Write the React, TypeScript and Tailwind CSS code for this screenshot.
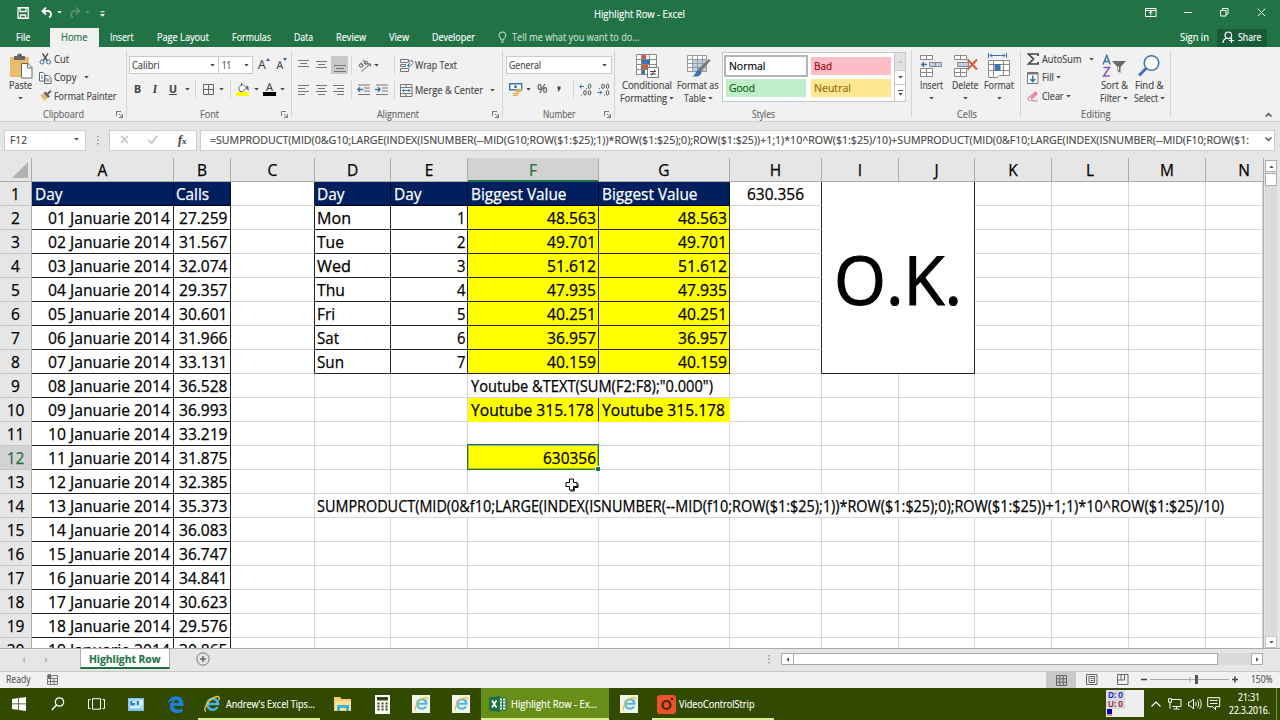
import { useLayoutEffect, useRef, useState } from "react";
import type { ReactNode } from "react";
import clsx from "clsx";

// Text squeezed or stretched to a known width, so labels keep their size in every font
function Fit({ w, className, children }: { w: number; className?: string; children: ReactNode }) {
  const ref = useRef<HTMLSpanElement>(null);
  const [scale, setScale] = useState(1);

  useLayoutEffect(() => {
    const el = ref.current;
    if (!el) return;
    el.style.transform = "none";
    const natural = el.getBoundingClientRect().width;
    el.style.transform = `scaleX(${w / natural})`;
    setScale(w / natural);
  }, [w, children]);

  return (
    <span className={clsx("block shrink-0 whitespace-nowrap", className)} style={{ width: w }}>
      <span ref={ref} className="inline-block origin-left" style={{ transform: `scaleX(${scale})` }}>
        {children}
      </span>
    </span>
  );
}

function Caret({ className }: { className?: string }) {
  return (
    <svg className={clsx("shrink-0", className)} width="5" height="3" viewBox="0 0 5 3">
      <path d="M.3 0h4.400L2.500 2.600z" fill="currentColor" />
    </svg>
  );
}

function Svg({ w, h, className, children }: { w: number; h: number; className?: string; children: ReactNode }) {
  return (
    <svg className={clsx("shrink-0", className)} width={w} height={h} viewBox={`0 0 ${w} ${h}`} fill="none">
      {children}
    </svg>
  );
}

function Lines({ rows, className }: { rows: [number, number][]; className?: string }) {
  return (
    <Svg w={12} h={12} className={className}>
      {rows.map(([x, len], i) => (
        <path key={i} d={`M${x} ${i * 3 + 1.5}h${len}`} stroke="#777" />
      ))}
    </Svg>
  );
}

function Group({ className, label, labelW, launcher, children }: { className: string; label: string; labelW: number; launcher?: boolean; children: ReactNode }) {
  return (
    <div className={clsx("relative flex h-[74px] shrink-0 flex-col", className)}>
      <div className="h-[60px]">{children}</div>
      <div className="flex h-[14px] items-center justify-center text-[#666]">
        <Fit w={labelW}>{label}</Fit>
      </div>
      {launcher && (
        <Svg w={7} h={7} className="absolute right-[4px] bottom-[3px]">
          <path d="M.5 5V.5H5M3 3l3 3M6.500 3v3.500H3" stroke="#777" />
        </Svg>
      )}
      <div className="absolute top-[4px] right-0 h-[66px] w-px bg-[#d4d4d4]" />
    </div>
  );
}

function Big({ className, icon, l1, w1, l2, w2 }: { className: string; icon: ReactNode; l1: string; w1: number; l2?: string; w2?: number }) {
  return (
    <div className={clsx("flex shrink-0 flex-col items-center", className)}>
      <div className="mt-[5px] flex h-[27px] items-center">{icon}</div>
      <div className="flex h-[13px] items-center">
        <Fit w={w1}>{l1}</Fit>
      </div>
      <div className="flex h-[13px] items-center gap-[2px]">
        {l2 && <Fit w={w2 ?? 20}>{l2}</Fit>}
        <Caret />
      </div>
    </div>
  );
}

function Vr({ className }: { className?: string }) {
  return <div className={clsx("h-[18px] w-px shrink-0 bg-[#d4d4d4]", className)} />;
}

const tabs = [
  { name: "Insert", w: 23.500, cls: "ml-[11px]" },
  { name: "Page Layout", w: 52, cls: "ml-[23.5px]" },
  { name: "Formulas", w: 39, cls: "ml-[23px]" },
  { name: "Data", w: 19, cls: "ml-[23.5px]" },
  { name: "Review", w: 30, cls: "ml-[23px]" },
  { name: "View", w: 20, cls: "ml-[23px]" },
  { name: "Developer", w: 43, cls: "ml-[23px]" },
];

function TitleBar() {
  return (
    <header className="h-[47px] bg-[#217346] text-white">
      <div className="flex h-7 items-center">
        <Svg w={12} h={12} className="ml-[17px] -mt-[3px]">
          <path d="M1 .75h10.200v10.500H1z" stroke="#fff" strokeWidth="1.300" />
          <path d="M3 1v3.500h6V1M3.500 11V8h5v3" stroke="#fff" strokeWidth="1.300" />
        </Svg>
        <Svg w={12} h={11} className="ml-[12px] -mt-[3px]">
          <path d="M5 .5L1.500 4 5 7.500M1.500 4H7a3.300 3.300 0 0 1 1 6.300" stroke="#fff" strokeWidth="1.800" />
        </Svg>
        <Caret className="ml-[4px] -mt-[4px]" />
        <Svg w={12} h={11} className="ml-[7px] -mt-[3px] opacity-25">
          <path d="M7 .5L10.500 4 7 7.500M10.500 4H5a3.300 3.300 0 0 0-1 6.300" stroke="#fff" strokeWidth="1.500" />
        </Svg>
        <Caret className="ml-[4px] -mt-[4px] opacity-30" />
        <Svg w={5} h={6} className="ml-[10px] -mt-px">
          <path d="M.5 .75h4" stroke="#fff" />
          <path d="M0 3h5L2.500 5.800z" fill="#fff" />
        </Svg>
        <Fit w={91} className="ml-[488.500px]">Highlight Row - Excel</Fit>
        <Svg w={12} h={9} className="ml-[460.500px] -mt-1">
          <path d="M.5 .5h10.500v8H.5zM.5 2.500h10.500M5.750 7.500v-4M4 5l1.750-1.700L7.500 5" stroke="#fff" />
        </Svg>
        <Svg w={8} h={9} className="ml-[27px] -mt-1">
          <path d="M0 4.500h8" stroke="#fff" />
        </Svg>
        <Svg w={9} h={9} className="ml-[28px] -mt-1">
          <path d="M.5 2.500h5.500V8H.5zM2.500 2.500V.5H8V6H6" stroke="#fff" />
        </Svg>
        <Svg w={9} h={9} className="ml-[28px] -mt-1">
          <path d="M.7 .7l7.500 7.500M8.200 .7L.7 8.200" stroke="#fff" />
        </Svg>
      </div>
      <nav className="flex h-[19px] items-center">
        <Fit w={14.500} className="ml-[16px]">File</Fit>
        <div className="ml-[19px] flex h-full w-[49px] items-center justify-center bg-[#f1f1f1] text-[#217346]">
          <Fit w={26.500}>Home</Fit>
        </div>
        {tabs.map((t) => (
          <Fit key={t.name} w={t.w} className={t.cls}>{t.name}</Fit>
        ))}
        <Svg w={9} h={13} className="ml-[23px]">
          <path d="M3 9V7.500C1.500 6.500 1 5.500 1 4.300a3.400 3.400 0 0 1 6.800 0c0 1.200-.6 2.200-2 3.200V9zM3 11h3" stroke="#d5e8dc" />
        </Svg>
        <Fit w={127.500} className="ml-[5px] text-[#c8dfd1]">Tell me what you want to do...</Fit>
        <Fit w={29} className="ml-[540px]">Sign in</Fit>
        <div className="ml-[8px] flex h-[18px] w-[50px] items-center bg-[#185c37]">
          <Svg w={13} h={13} className="ml-[5px]">
            <circle cx="6.300" cy="4.300" r="3.300" stroke="#fff" strokeWidth="1.200" />
            <path d="M.8 12c.3-2.600 1.600-4 3.600-4.700M7 9.500h5M9.500 7v5" stroke="#fff" strokeWidth="1.200" />
          </Svg>
          <Fit w={23.500} className="ml-[3px]">Share</Fit>
        </div>
      </nav>
    </header>
  );
}

function Ribbon() {
  return (
    <div className="flex h-[75px] border-b border-[#d2d2d2] bg-[#f1f1f1] text-[#444]">
      <Group className="w-[127px]" label="Clipboard" labelW={41} launcher>
        <div className="flex">
          <Big
            className="ml-[8px] w-[25px]"
            l1="Paste"
            w1={23}
            icon={
              <Svg w={24} h={26}>
                <path d="M1 4h19v20H1z" fill="#e8bd6d" />
                <path d="M5 3h3a2.500 2.500 0 0 1 5 0h3v4H5z" fill="#666" />
                <path d="M12.500 10.500h6.500l4 4v10.500H12.500z" fill="#fff" stroke="#666" />
                <path d="M18.500 10.500v4.500h4.500" stroke="#666" />
              </Svg>
            }
          />
          <div className="ml-[6px] mt-[3px] flex flex-col">
            <div className="flex h-[18px] items-center">
              <Svg w={13} h={12}>
                <path d="M3.500 .5L8.500 8M9 .5L4 8" stroke="#555" strokeWidth="1.400" />
                <circle cx="3" cy="9" r="2" stroke="#3b72b0" />
                <circle cx="9.500" cy="9" r="2" stroke="#3b72b0" />
              </Svg>
              <Fit w={15} className="ml-[2px]">Cut</Fit>
            </div>
            <div className="flex h-[19px] items-center">
              <Svg w={13} h={12}>
                <path d="M.5 .5h3.500l2 2V9H.5zM5.500 3.500H9.500l2.500 2.500v5.500H5.500z" fill="#fff" stroke="#666" />
                <path d="M2 4h2M2 6h2M7 7h3.500M7 9h3.500" stroke="#3b72b0" />
              </Svg>
              <Fit w={22.500} className="ml-[2px]">Copy</Fit>
              <Caret className="ml-[7px]" />
            </div>
            <div className="flex h-[18px] items-center">
              <Svg w={13} h={12}>
                <path d="M1 5l4-1.500 4 4L5.500 11z" fill="#e8bd6d" />
                <path d="M4.500 3l2-1.500 4.500 5L9 8z" fill="#666" />
                <path d="M8.500 4L12 .7" stroke="#666" strokeWidth="2" />
              </Svg>
              <Fit w={62.500} className="ml-[2px]">Format Painter</Fit>
            </div>
          </div>
        </div>
      </Group>

      <Group className="w-[165px]" label="Font" labelW={19} launcher>
        <div className="ml-[2px] flex h-[18px] translate-y-[9px] items-center">
          <div className="flex h-[18px] w-[90px] items-center border border-[#ccc] bg-white pl-[2px]">
            <Fit w={27.500}>Calibri</Fit>
            <Caret className="ml-[50px]" />
          </div>
          <div className="-ml-px flex h-[18px] w-[35px] items-center border border-[#ccc] bg-white pl-[3px]">
            <Fit w={9}>11</Fit>
            <Caret className="ml-[13px]" />
          </div>
          <span className="ml-[5px] text-[12px] leading-none">A</span>
          <Svg w={4} h={3} className="-mt-[11px]">
            <path d="M0 3h4L2 0z" fill="#3b5f96" />
          </Svg>
          <span className="ml-[7px] mt-px text-[10.500px] leading-none">A</span>
          <Svg w={4} h={3} className="-mt-[11px]">
            <path d="M0 0h4L2 3z" fill="#3b5f96" />
          </Svg>
        </div>
        <div className="flex h-[18px] translate-y-[15px] items-center">
          <span className="ml-[7px] w-[8px] text-[10.500px] font-bold">B</span>
          <span className="ml-[11px] w-[6px] font-serif text-[11px] font-bold italic">I</span>
          <span className="ml-[10px] w-[8px] text-[10.500px] font-bold underline">U</span>
          <Caret className="ml-[8px]" />
          <Vr className="ml-[5px]" />
          <Svg w={11} h={11} className="ml-[7px]">
            <path d="M.5 .5h10v10H.5zM5.500 .5v10M.5 5.500h10" stroke="#666" />
          </Svg>
          <Caret className="ml-[5px]" />
          <Vr className="ml-[6px]" />
          <Svg w={14} h={14} className="ml-[5px]">
            <path d="M0 10h13v4H0z" fill="#ffff00" />
            <path d="M2.500 5.500L6.500 2l4 4-4 3.500H4z" fill="#fff" stroke="#666" />
            <path d="M5.500 4V1" stroke="#666" />
            <path d="M10.500 3.500c2 .5 2.500 2.500 2 5.500l-2-2.500z" fill="#3b5f96" />
          </Svg>
          <Caret className="ml-[4px]" />
          <div className="ml-[4px] flex w-[13px] flex-col items-center">
            <span className="text-[11px] leading-[10px]">A</span>
            <div className="h-[4px] w-full bg-black" />
          </div>
          <Caret className="ml-[4px]" />
        </div>
      </Group>

      <Group className="w-[211px]" label="Alignment" labelW={42} launcher>
        <div className="flex h-[18px] translate-y-[9px] items-center">
          <Lines rows={[[0, 11], [2, 7], [0, 11]]} className="ml-[6px]" />
          <Lines rows={[[0, 0], [0, 11], [2, 7], [0, 11]]} className="ml-[6px] -mt-1" />
          <div className="ml-[3px] flex h-[18px] w-[17px] items-end justify-center bg-[#c8c8c8]">
            <Lines rows={[[0, 0], [0, 12], [2, 8], [0, 12]]} className="mb-px" />
          </div>
          <Vr className="ml-[3px]" />
          <Svg w={14} h={13} className="ml-[6px]">
            <circle cx="3" cy="6.500" r="1.700" stroke="#555" />
            <path d="M3 3.500l2.500 3.500M5 .8l3 4.500" stroke="#555" />
            <circle cx="8" cy="3.700" r="1.500" stroke="#555" />
            <path d="M3.500 12.500L12 5M9 4.800h3.300v3" stroke="#666" />
          </Svg>
          <Caret className="ml-[2px]" />
          <Vr className="ml-[15px]" />
          <Svg w={14} h={13} className="ml-[5px]">
            <path d="M.5 .5h8v3h-8zM.5 5.500h5v2h-5zM.5 9.500h8v3h-8z" stroke="#777" />
            <path d="M9 2h4M13 2.500c0 3-1 4-5 4M10 4L7.500 6.500 10 9" stroke="#3b72b0" />
          </Svg>
          <Fit w={42} className="ml-[1px]">Wrap Text</Fit>
        </div>
        <div className="flex h-[18px] translate-y-[16px] items-center">
          <Lines rows={[[0, 11], [0, 7], [0, 11], [0, 7]]} className="ml-[6px]" />
          <Lines rows={[[0, 11], [2, 7], [0, 11], [2, 7]]} className="ml-[6px]" />
          <Lines rows={[[0, 11], [4, 7], [0, 11], [4, 7]]} className="ml-[5px]" />
          <Vr className="ml-[6px]" />
          <Svg w={14} h={12} className="ml-[5px]">
            <path d="M1 1h12M7 4h6M7 7h6M1 10.500h12" stroke="#777" />
            <path d="M6 5.500H1M3 3.200L.8 5.500 3 7.800" stroke="#3b72b0" strokeWidth="1.300" />
          </Svg>
          <Svg w={14} h={12} className="ml-[4px]">
            <path d="M1 1h12M7 4h6M7 7h6M1 10.500h12" stroke="#777" />
            <path d="M0 5.500h5M3 3.200l2.200 2.300L3 7.800" stroke="#3b72b0" strokeWidth="1.300" />
          </Svg>
          <Vr className="ml-[5px]" />
          <Svg w={13} h={13} className="ml-[5px]">
            <path d="M.5 .5h11.500v12H.5zM.5 3.500h11.500M.5 9.500h11.500M6 .5v3M6 9.500v3" stroke="#777" />
            <path d="M2.500 6.500h7.500M4 5L2.500 6.500 4 8M8.500 5L10 6.500 8.500 8" stroke="#3b72b0" />
          </Svg>
          <Fit w={68} className="ml-[2px]">Merge & Center</Fit>
          <Caret className="ml-[7px]" />
        </div>
      </Group>

      <Group className="w-[112px]" label="Number" labelW={32.500} launcher>
        <div className="ml-[3px] flex h-[18px] w-[106px] translate-y-[9px] items-center border border-[#ccc] bg-white pl-[2px]">
          <Fit w={32}>General</Fit>
          <Caret className="ml-[61px]" />
        </div>
        <div className="flex h-[18px] translate-y-[15px] items-center">
          <Svg w={14} h={13} className="ml-[6px]">
            <path d="M.7 .7h12v6H.7z" fill="#fff" stroke="#3b72b0" strokeWidth="1.400" />
            <circle cx="6.500" cy="3.700" r="1.500" fill="#3b72b0" />
            <path d="M7 6.500h6M7 8.500h5M4 10.500h6M4 12.500h5" stroke="#e3a951" strokeWidth="1.300" />
          </Svg>
          <Caret className="ml-[3px]" />
          <Fit w={10.500} className="ml-[6px] text-[12px]">%</Fit>
          <Svg w={4} h={6} className="ml-[9px]">
            <path d="M.5 .5h3v2.500L1.500 5.500H.5L1.500 3H.5z" fill="#444" />
          </Svg>
          <Vr className="ml-[12px]" />
          <Svg w={13} h={13} className="ml-[5px]">
            <path d="M5 3.500H1M2.500 1.500L.7 3.500l1.800 2" stroke="#3b72b0" />
            <ellipse cx="10.500" cy="3.300" rx="1.300" ry="2.300" stroke="#555" />
            <path d="M7 5.500h1M1.800 12h1" stroke="#555" />
            <ellipse cx="6" cy="9.800" rx="1.300" ry="2.300" stroke="#555" />
            <ellipse cx="10.500" cy="9.800" rx="1.300" ry="2.300" stroke="#555" />
          </Svg>
          <Svg w={13} h={13} className="ml-[5px]">
            <path d="M.5 9.500h4.500M3 7.500l1.800 2L3 11.500" stroke="#3b72b0" />
            <ellipse cx="6" cy="3.300" rx="1.300" ry="2.300" stroke="#555" />
            <ellipse cx="10.500" cy="3.300" rx="1.300" ry="2.300" stroke="#555" />
            <path d="M1.800 5.500h1M7 12h1" stroke="#555" />
            <ellipse cx="10.500" cy="9.800" rx="1.300" ry="2.300" stroke="#555" />
          </Svg>
        </div>
      </Group>

      <Group className="w-[297px]" label="Styles" labelW={23}>
        <div className="flex">
          <Big
            className="ml-[4px] w-[55px]"
            l1="Conditional"
            w1={50}
            l2="Formatting"
            w2={47}
            icon={
              <Svg w={24} h={26}>
                <path d="M1.500 1.500h20v20h-20z" fill="#fff" />
                <path d="M1.500 1.500h20v20h-20zM1.500 6.500h20M1.500 11.500h20M1.500 16.500h20M6.500 1.500v20M14.500 1.500v20" stroke="#888" />
                <path d="M7 2h4v4H7zM7 12h6v4H7z" fill="#d1593c" />
                <path d="M7 7h8v4H7zM7 17h3v4H7z" fill="#3b72b0" />
                <path d="M12.500 14.500h11v10h-11z" fill="#fff" stroke="#777" />
                <path d="M15 18.500h6M15 21h6M20 16.500l-3.500 6" stroke="#444" />
              </Svg>
            }
          />
          <Big
            className="ml-[2px] w-[44px]"
            l1="Format as"
            w1={41.500}
            l2="Table"
            w2={22}
            icon={
              <Svg w={25} h={25}>
                <path d="M1.500 2.500h19v16h-19z" fill="#fff" />
                <path d="M6 7h14v11H6z" fill="#bcd0e8" />
                <path d="M1.500 2.500h19v16h-19zM1.500 6.500h19M1.500 10.500h19M1.500 14.500h19M6.500 2.500v16M11.500 2.500v16M16.500 2.500v16" stroke="#999" />
                <path d="M23.500 7.500L15 17l-2-1L23 7z" fill="#777" stroke="#777" strokeWidth="1.500" />
                <path d="M6 23c4 0 3-6 7-6 3 0 3 3 1.500 4.500C12.500 24 9 24 6 23z" fill="#3b72b0" />
              </Svg>
            }
          />
          <div className="ml-[2px] mt-[5px] flex h-[50px] w-[184px] border border-[#c6c6c6] bg-white">
            <div className="flex w-[171px] flex-wrap content-start text-[11px]">
              <div className="ml-[1px] mt-[2px] flex h-[22px] w-[84px] items-center border-2 border-[#b5b5b5] pb-[2px] pl-[3px] text-black">
                <Fit w={36.500}>Normal</Fit>
              </div>
              <div className="mt-[4px] ml-[3px] flex h-[18px] w-[80px] items-center bg-[#fdbdc7] pb-[2px] pl-[3px] text-[#9c0006]">
                <Fit w={18}>Bad</Fit>
              </div>
              <div className="mt-[2px] ml-[3px] flex h-[18px] w-[80px] items-center bg-[#c0edca] pb-[2px] pl-[3px] text-[#006100]">
                <Fit w={26}>Good</Fit>
              </div>
              <div className="mt-[2px] ml-[5px] flex h-[18px] w-[80px] items-center bg-[#ffe893] pb-[2px] pl-[3px] text-[#9c6500]">
                <Fit w={37}>Neutral</Fit>
              </div>
            </div>
            <div className="flex grow flex-col border-l border-[#c6c6c6]">
              <div className="flex h-[17px] items-center justify-center bg-[#e1e1e1]">
                <Caret className="rotate-180 text-[#bbb]" />
              </div>
              <div className="flex h-[15px] items-center justify-center border-y border-[#c6c6c6]">
                <Caret />
              </div>
              <div className="flex grow flex-col items-center justify-center gap-[2px]">
                <div className="h-px w-[5px] bg-[#555]" />
                <Caret />
              </div>
            </div>
          </div>
        </div>
      </Group>

      <Group className="w-[109px]" label="Cells" labelW={20}>
        <div className="flex">
          <Big
            className="ml-[5px] w-[28px]"
            l1="Insert"
            w1={23}
            icon={
              <Svg w={22} h={24}>
                <path d="M.5 1.500h12v4H.5zM6.500 1.500v4M.5 14.500h12v8H.5zM.5 18.500h12M6.500 14.500v8" fill="#fff" stroke="#888" />
                <path d="M9.500 8.500h12v4h-12z" fill="#bcd0e8" stroke="#888" />
                <path d="M15.500 8.500v4" stroke="#888" />
                <path d="M7 10.500H2M4 8.300L1.800 10.500 4 12.700" stroke="#3b72b0" strokeWidth="1.400" />
              </Svg>
            }
          />
          <Big
            className="ml-[5px] w-[30px]"
            l1="Delete"
            w1={26.500}
            icon={
              <Svg w={25} h={24}>
                <path d="M1.500 1.500h12v4h-12zM7.500 1.500v4M1.500 14.500h12v8h-12zM1.500 18.500h12M7.500 14.500v8" fill="#fff" stroke="#888" />
                <path d="M4.500 8.500h11v4h-11z" fill="#bcd0e8" stroke="#888" />
                <path d="M14.500 5.500l9.500 10M24 5.500l-9.500 10" stroke="#d9593c" strokeWidth="2" />
              </Svg>
            }
          />
          <Big
            className="ml-[3px] w-[32px]"
            l1="Format"
            w1={30}
            icon={
              <Svg w={24} h={25}>
                <path d="M1.500 0v5M19.500 0v5M3 2.500h15M5 .5l-2 2 2 2M16 .5l2 2-2 2" stroke="#3b72b0" />
                <path d="M1.500 7.500h21v14h-9l-2 3h-10z" fill="#fff" />
                <path d="M1.500 7.500h21v15h-10l-2 2h-9zM1.500 11.500h21M1.500 17.500h21M6.500 7.500v16M16.500 7.500v15" stroke="#888" />
                <path d="M7.500 11h6v7h-6z" fill="#3b72b0" />
              </Svg>
            }
          />
        </div>
      </Group>

      <Group className="w-[150px]" label="Editing" labelW={29.500}>
        <div className="flex">
          <div className="ml-[6px] mt-[3px] flex w-[66px] flex-col">
            <div className="flex h-[18px] items-center">
              <Svg w={12} h={12}>
                <path d="M11 3V1H1.500l5 5-5 5H11V9" stroke="#444" strokeWidth="1.700" />
              </Svg>
              <Fit w={39.500} className="ml-[3px]">AutoSum</Fit>
              <Caret className="ml-[7px]" />
            </div>
            <div className="flex h-[19px] items-center">
              <Svg w={12} h={12}>
                <path d="M.5 .5h10.500v11H.5z" fill="#fff" stroke="#777" />
                <path d="M.5 1.500h10.500" stroke="#777" strokeWidth="2" />
                <path d="M5.750 3.500v6M3.200 7l2.550 2.600L8.300 7" stroke="#3b72b0" strokeWidth="1.500" />
              </Svg>
              <Fit w={12} className="ml-[3px]">Fill</Fit>
              <Caret className="ml-[2px]" />
            </div>
            <div className="flex h-[18px] items-center">
              <Svg w={12} h={12}>
                <path d="M3 6l5.500-5L11 4 5.500 9z" fill="#e38a9b" />
                <path d="M2.500 6.500L5 9.500l-1.500 1H2L.8 8z" fill="#fff" stroke="#d66f86" />
                <path d="M5 10.800h5.500" stroke="#d66f86" />
              </Svg>
              <Fit w={21.500} className="ml-[3px]">Clear</Fit>
              <Caret className="ml-[2px]" />
            </div>
          </div>
          <Big
            className="ml-[6px] w-[30px]"
            l1="Sort &"
            w1={27}
            l2="Filter"
            w2={20.500}
            icon={
              <Svg w={24} h={24}>
                <path d="M1 10.500L4.700 1.500 8.400 10.500M2.300 7.500h4.800" stroke="#3b72b0" strokeWidth="1.500" />
                <path d="M1.500 13.500h6L1.500 22h6.500" stroke="#9255b5" strokeWidth="1.500" />
                <path d="M10 7h14l-5.500 6v6l-3-2v-4z" fill="#6a6a6a" />
                <path d="M16.500 12.500v4" stroke="#ddd" />
              </Svg>
            }
          />
          <Big
            className="ml-[4px] w-[32px]"
            l1="Find &"
            w1={28.500}
            l2="Select"
            w2={24}
            icon={
              <Svg w={23} h={24}>
                <circle cx="13.500" cy="9" r="7.300" fill="#fff" stroke="#3b72b0" strokeWidth="1.500" />
                <path d="M8 14.500L1 21.500" stroke="#3b72b0" strokeWidth="3" />
              </Svg>
            }
          />
        </div>
      </Group>
      <div className="flex grow items-end justify-end pr-[8px] pb-[4px]">
        <Svg w={7} h={5}>
          <path d="M.5 4.500l3-3 3 3" stroke="#555" strokeWidth="1.500" />
        </Svg>
      </div>
    </div>
  );
}

const FORMULA =
  "=SUMPRODUCT(MID(0&G10;LARGE(INDEX(ISNUMBER(--MID(G10;ROW($1:$25);1))*ROW($1:$25);0);ROW($1:$25))+1;1)*10^ROW($1:$25)/10)+SUMPRODUCT(MID(0&F10;LARGE(INDEX(ISNUMBER(--MID(F10;ROW($1:";

function FormulaBar() {
  return (
    <div className="flex h-[36px] items-center bg-[#e6e6e6] text-[#444]">
      <div className="ml-[4px] flex h-[21px] w-[82px] items-center border border-[#cfcfcf] bg-white pb-px pl-[5px]">
        <Fit w={17} className="text-[11px]">F12</Fit>
        <Caret className="ml-[47px]" />
      </div>
      <Svg w={2} h={9} className="ml-[11px]">
        <path d="M1 0v9" stroke="#999" strokeWidth="1.500" strokeDasharray="1.500 2" />
      </Svg>
      <div className="ml-[10px] flex h-[21px] w-[88px] items-center border border-[#cfcfcf] bg-white pb-px">
        <Svg w={9} h={9} className="ml-[10px]">
          <path d="M1 1l7 7M8 1L1 8" stroke="#bdbdbd" strokeWidth="1.300" />
        </Svg>
        <Svg w={10} h={9} className="ml-[19px]">
          <path d="M.7 5l3 3L9.300 .8" stroke="#bdbdbd" strokeWidth="1.500" />
        </Svg>
        <span className="ml-[20px] font-['Liberation_Serif',serif] text-[12px] font-bold italic">f<span className="text-[9px]">x</span></span>
      </div>
      <div className="ml-[3px] flex h-[21px] w-[1075px] items-center border border-[#cfcfcf] bg-white pb-[2px] pl-[9px]">
        <Fit w={1039} className="text-[11px]">{FORMULA}</Fit>
        <Svg w={7} h={5} className="ml-[16px]">
          <path d="M.5 .5l3 3 3-3" stroke="#555" strokeWidth="1.500" />
        </Svg>
      </div>
    </div>
  );
}

const columns = ["A", "B", "C", "D", "E", "F", "G", "H", "I", "J", "K", "L", "M", "N"];
const template = "grid-cols-[32px_142px_57px_84px_76px_77px_131px_131px_92px_77px_76px_77px_77px_77px_57px]";

const calls = [
  "27.259", "31.567", "32.074", "29.357", "30.601", "31.966", "33.131", "36.528", "36.993", "33.219",
  "31.875", "32.385", "35.373", "36.083", "36.747", "34.841", "30.623", "29.576", "30.865",
];
const days: { name: string; w: number; value: string }[] = [
  { name: "Mon", w: 34, value: "48.563" },
  { name: "Tue", w: 27, value: "49.701" },
  { name: "Wed", w: 34, value: "51.612" },
  { name: "Thu", w: 28, value: "47.935" },
  { name: "Fri", w: 18, value: "40.251" },
  { name: "Sat", w: 22, value: "36.957" },
  { name: "Sun", w: 27, value: "40.159" },
];

type CellData = { text?: string; w?: number; cls?: string; span?: number };

const NAVY = "bg-[#001f5f] text-white border-r-[#000a30] border-b-black";
const BOX = "border-r-[#222] border-b-[#222]";
const YELLOW = "bg-[#ffff00]";

function cellAt(col: string, row: number): CellData | null {
  if (col === "A") {
    if (row === 1) return { text: "Day", w: 27.500, cls: NAVY };
    return { text: `${String(row - 1).padStart(2, "0")} Januarie 2014`, w: 122, cls: clsx(BOX, "justify-end") };
  }
  if (col === "B") {
    if (row === 1) return { text: "Calls", w: 33, cls: NAVY };
    return { text: calls[row - 2], w: 48.500, cls: clsx(BOX, "justify-end") };
  }
  if (row === 1) {
    if (col === "D" || col === "E") return { text: "Day", w: 27.500, cls: NAVY };
    if (col === "F" || col === "G") return { text: "Biggest Value", w: 95.500, cls: NAVY };
    if (col === "H") return { text: "630.356", w: 57, cls: "justify-center border-r-[#222]" };
  }
  if (row <= 8) {
    if (col === "C" || col === "H") return { cls: "border-r-[#222]" };
    if (col === "I" || col === "J") return null;
    const day = days[row - 2];
    if (day && col === "D") return { text: day.name, w: day.w, cls: BOX };
    if (day && col === "E") return { text: String(row - 1), w: 8.500, cls: clsx(BOX, "justify-end") };
    if (day && (col === "F" || col === "G")) return { text: day.value, w: 49, cls: clsx(BOX, YELLOW, "justify-end") };
  }
  if (row === 9 && col === "F") return { text: 'Youtube &TEXT(SUM(F2:F8);"0.000")', w: 242, span: 2 };
  if (row === 9 && col === "G") return null;
  if (row === 10 && col === "F") return { text: "Youtube 315.178", w: 123, cls: clsx(YELLOW, "border-r-[#222] border-b-[#ffff00]") };
  if (row === 10 && col === "G") return { text: "Youtube 315.178", w: 123, cls: clsx(YELLOW, "border-r-[#ffff00] border-b-[#ffff00]") };
  if (row === 12 && col === "F") return { text: "630356", w: 53, cls: clsx(YELLOW, "justify-end relative") };
  if (row === 14 && col === "D") {
    return {
      text: "SUMPRODUCT(MID(0&f10;LARGE(INDEX(ISNUMBER(--MID(f10;ROW($1:$25);1))*ROW($1:$25);0);ROW($1:$25))+1;1)*10^ROW($1:$25)/10)",
      w: 907,
      span: 11,
    };
  }
  if (row === 14 && col > "D") return null;
  return {};
}

function Sheet() {
  return (
    <div className="flex h-[490px] bg-[#e6e6e6] text-[15.500px] text-black [-webkit-text-stroke:0.25px]">
      <div className="relative w-[1263px] overflow-hidden">
        <div className={clsx("grid h-[24px] border-b border-[#ababab]", template)}>
          <div className="flex items-end justify-end border-r border-[#ababab] pr-[3px] pb-[3px]">
            <Svg w={16} h={16}>
              <path d="M16 0v16H0z" fill="#b2b2b2" />
            </Svg>
          </div>
          {columns.map((c) => (
            <div
              key={c}
              className={clsx(
                "flex items-center justify-center border-r border-[#ababab] pt-[3px]",
                c === "F" && "-mb-px border-b-2 border-b-[#217346] bg-[#d2d2d2] text-[#217346]",
                c === "N" && "border-r-0 pl-[19px]",
              )}
            >
              {c}
            </div>
          ))}
        </div>
        <div className={clsx("grid auto-rows-[24px] bg-white", template)}>
          {Array.from({ length: 20 }, (_, i) => i + 1).map((row) => [
            <div
              key={row}
              className={clsx(
                "flex items-center justify-center border-r border-b border-r-[#ababab] border-b-[#c6c6c6] pt-[2px]",
                row === 12 ? "border-r-[#217346] bg-[#d2d2d2] text-[#217346]" : "bg-[#e6e6e6]",
              )}
              style={{ gridRow: row, gridColumn: 1 }}
            >
              {row}
            </div>,
            ...columns.map((c, ci) => {
              const cell = cellAt(c, row);
              if (!cell || (row === 1 && (c === "I" || c === "J"))) return null;
              return (
                <div
                  key={c + row}
                  className={clsx(
                    "flex items-center border-r border-b border-[#d6d6d6] pt-[2px]",
                    c === "A" || c === "B" ? "pr-[3px]" : "pr-[2px]",
                    c === "D" || c === "B" ? "pl-[2px]" : "pl-[2.5px]",
                    cell.cls,
                  )}
                  style={{ gridRow: row, gridColumn: `${ci + 2} / span ${cell.span ?? 1}` }}
                >
                  {cell.text && <Fit w={cell.w ?? 20}>{cell.text}</Fit>}
                  {row === 12 && c === "F" && (
                    <div className="absolute -top-[2px] -right-[1px] -bottom-[1px] -left-[1px] border border-[#217346] outline -outline-offset-2 outline-[#217346]/40">
                      <div className="absolute -right-[2px] -bottom-[2px] h-[5px] w-[5px] border-t border-l border-white bg-[#217346]" />
                    </div>
                  )}
                </div>
              );
            }),
          ])}
          <div className="col-start-10 col-end-12 row-start-1 row-end-9 flex items-center justify-center border-r border-b border-[#222] pt-[3px] pr-px text-[68px] leading-none [-webkit-text-stroke:1.2px]">
            <Fit w={128}>O.K.</Fit>
          </div>
        </div>
        {/* mouse pointer */}
        <Svg w={14} h={14} className="absolute top-[320px] left-[565px]">
          <path d="M4.500 1h4v3.500H12v4H8.500V12h-4V8.500H1v-4h3.500z" fill="#fff" stroke="#000" />
          <path d="M5.500 13H9.300V9.500H13V5.500" stroke="#000" />
        </Svg>
      </div>
      <div className="flex w-[17px] flex-col items-center border-l border-[#ababab] pt-[2px] pr-[2px]">
        <div className="flex h-[12px] w-[12px] items-center justify-center border border-[#ababab] bg-white text-[#555]">
          <Caret className="rotate-180" />
        </div>
        <div className="mt-px h-[13px] w-[12px] border border-[#ababab] bg-white" />
        <div className="w-[12px] grow bg-[#dadada]" />
        <div className="flex h-[12px] w-[12px] items-center justify-center border border-[#c6c6c6] bg-white text-[#555]">
          <Caret />
        </div>
      </div>
    </div>
  );
}

function SheetTabs() {
  return (
    <div className="flex h-[23px] border-t border-[#ababab] bg-[#e6e6e6]">
      <Svg w={80} h={21}>
        <path d="M25 8v6l-3-3zM45 8v6l3-3z" fill="#bbb" />
      </Svg>
      <div className="flex h-[20px] w-[90px] items-center justify-center border-x border-b-2 border-x-[#ababab] border-b-[#217346] bg-white text-[11px] font-bold text-[#217346]">
        <Fit w={71.500}>Highlight Row</Fit>
      </div>
      <Svg w={14} h={14} className="ml-[26px] mt-[3px]">
        <circle cx="7" cy="7" r="6.200" stroke="#777" />
        <path d="M7 4v6M4 7h6" stroke="#666" strokeWidth="1.500" />
      </Svg>
      <Svg w={2} h={9} className="ml-[558px] mt-[6px]">
        <path d="M1 0v9" stroke="#999" strokeWidth="1.500" strokeDasharray="1.500 2" />
      </Svg>
      <div className="mt-[4px] ml-[11px] flex h-[12px] text-[#555]">
        <div className="flex w-[13px] items-center justify-center border border-[#ababab] bg-white">
          <Caret className="rotate-90" />
        </div>
        <div className="w-[424px] border border-l-0 border-[#ababab] bg-white" />
        <div className="w-[33px] bg-[#dadada]" />
        <div className="flex w-[12px] items-center justify-center border border-[#ababab] bg-white">
          <Caret className="-rotate-90" />
        </div>
      </div>
    </div>
  );
}

function StatusBar() {
  return (
    <div className="flex h-[17px] items-center border-t border-[#c6c6c6] bg-[#f1f1f1] pb-px text-[#555]">
      <Fit w={24.500} className="ml-[6px]">Ready</Fit>
      <Svg w={12} h={11} className="ml-[16px]">
        <path d="M.5 4.500h10v6H.5zM5 1.500h5.500v3M.5 7.500h10M3.500 4.500v6M7 4.500v6" stroke="#777" />
        <circle cx="2.300" cy="2.300" r="2.200" fill="#666" />
      </Svg>
      <div className="ml-[987.500px] -mb-px flex h-[16px] w-[30px] items-center justify-center bg-[#c9c9c9]">
        <Svg w={11} h={11}>
          <path d="M.5 .5h10v10H.5zM.5 3.800h10M.5 7.200h10M3.800 .5v10M7.200 .5v10" stroke="#666" />
        </Svg>
      </div>
      <Svg w={12} h={11} className="ml-[10px]">
        <path d="M.5 .5h10.500v10H.5zM3 2.500h5.500v6H3zM4.500 4.500h3M4.500 6.500h3" stroke="#666" />
      </Svg>
      <Svg w={12} h={11} className="ml-[19px]">
        <path d="M.5 .5h10.500v10H.5zM4 .5V6M7.500 .5V6M.5 6h7" stroke="#666" />
      </Svg>
      <Svg w={98} h={9} className="ml-[12px]">
        <path d="M0 4.500h6M91 4.500h6M94 1.500v6" stroke="#444" strokeWidth="1.500" />
        <path d="M9 4.500h79M49 2v5" stroke="#aaa" />
        <path d="M54 0h3v9h-3z" fill="#555" />
      </Svg>
      <Fit w={21.500} className="ml-[12px]">150%</Fit>
    </div>
  );
}

function IeGlyph() {
  return (
    <>
      <path d="M14.500 12a5.500 5.500 0 1 1 .7-3H5.500" stroke="#45b6ea" strokeWidth="2.500" fill="none" />
      <path d="M3 16.500C-1 15 6 3 14 1.500c3-.4 2.500 2 1.500 3.500" stroke="#f0bf3a" strokeWidth="1.400" fill="none" />
    </>
  );
}

function IeDoc({ className }: { className: string }) {
  return (
    <svg className={clsx("shrink-0", className)} width="18" height="18" viewBox="0 0 18 18">
      <path d="M0 0h18v18H0z" fill="#f3f3ea" />
      <g transform="translate(1.500 1) scale(.86)">
        <IeGlyph />
      </g>
    </svg>
  );
}

function Taskbar() {
  return (
    <footer className="flex h-[32px] items-center bg-[#314a00] text-[10.500px] text-white">
      <Svg w={14} h={14} className="ml-[12px]">
        <path d="M0 2l6-.9v5.400H0zM6.700 1L14 0v6.500H6.700zM0 7.200h6v5.500L0 12zM6.700 7.200H14V14l-7.300-1z" fill="#fff" />
      </Svg>
      <Svg w={14} h={14} className="ml-[25px]">
        <circle cx="8.500" cy="5" r="4.200" stroke="#fff" strokeWidth="1.200" />
        <path d="M5.500 8L.8 13" stroke="#fff" strokeWidth="1.300" />
      </Svg>
      <Svg w={17} h={12} className="ml-[23px]">
        <path d="M4.500 .7h8v10.500h-8zM2.500 1.500h-2v9h2M14.500 1.500h2v9h-2" stroke="#fff" />
      </Svg>
      <Svg w={16} h={13} className="ml-[23px]">
        <path d="M0 0h16v13H0z" fill="#7cc3ee" />
        <path d="M1 1h14v10H1z" fill="#a9dbf7" />
        <circle cx="4.500" cy="5" r="2.500" fill="#2f7dc0" />
        <path d="M4.500 5V2.500A2.500 2.500 0 0 1 7 5z" fill="#fff" />
        <path d="M9 3h2v4H9z" fill="#2f7dc0" />
        <path d="M12 3h2v4h-2zM3 9h9" stroke="#fff" />
      </Svg>
      <Svg w={16} h={17} className="ml-[24px]">
        <path
          d="M0 7.500C.6 3 4 .3 8 .3c4.800 0 7.500 3.200 7.500 7.700v2H5.500c.2 2.600 2.300 3.500 4.500 3.500 1.800 0 3.300-.5 4.500-1.300v3.500c-1.500.9-3.400 1.300-5.300 1.300-4.500 0-7.400-2.600-7.400-6.500 0-2.600 1.300-4.500 3.700-5.700C2.600 5 1 6 0 7.500zM5.700 7h5.100c0-2-1-3-2.500-3S6 5.200 5.700 7z"
          fill="#1a7fd8"
        />
      </Svg>
      <div className="ml-[14px] flex h-full w-[122px] items-center border-b-2 border-[#d8f08e] pt-[2px]">
        <Svg w={18} h={18} className="ml-[5px]">
          <IeGlyph />
        </Svg>
        <Fit w={89} className="ml-[5px]">Andrew's Excel Tips...</Fit>
      </div>
      <Svg w={18} h={16} className="ml-[14px]">
        <path d="M0 1h6l1.500 2H17v12H0z" fill="#f2cf70" />
        <path d="M1 5h16v9H1z" fill="#fbe294" />
        <path d="M3 9h12v6h-3v-3H6v3H3z" fill="#3fb2dd" />
      </Svg>
      <Svg w={15} h={19} className="ml-[23px]">
        <path d="M0 0h15v19H0z" fill="#fff" />
        <path d="M2 2h11v3.500H2z" fill="#33480a" />
        <path d="M2.500 8.500h10M2.500 11.500h10M2.500 14.500h10" stroke="#33480a" strokeWidth="2" strokeDasharray="2 2" />
      </Svg>
      <IeDoc className="ml-[22px]" />
      <IeDoc className="ml-[22px]" />
      <div className="ml-[11px] flex h-full w-[128px] items-center border-b-2 border-[#d8f08e] bg-[#668e18] pt-[2px]">
        <Svg w={18} h={16} className="ml-[8px]">
          <path d="M9 2h8v12H9z" fill="#e9f3ea" stroke="#217346" />
          <path d="M10 5h7M10 8h7M10 11h7M13.500 2v12" stroke="#217346" />
          <path d="M0 1.500L11 0v16L0 14.500z" fill="#1d7044" />
          <path d="M3 4.500l4.500 7M7.500 4.500L3 11.500" stroke="#fff" strokeWidth="1.600" />
        </Svg>
        <Fit w={86} className="ml-[4px]">Highlight Row - Ex...</Fit>
      </div>
      <IeDoc className="ml-[11px]" />
      <div className="ml-[14px] flex h-full w-[122px] items-center border-b-2 border-[#d8f08e] pt-[2px]">
        <Svg w={20} h={19} className="ml-[5px]">
          <rect width="19" height="19" rx="3" fill="#ea5329" />
          <circle cx="9.500" cy="10" r="4" stroke="#4a2410" strokeWidth="2.200" />
          <circle cx="15" cy="4" r="1.300" fill="#4a2410" />
        </Svg>
        <Fit w={75.500} className="ml-[2px]">VideoControlStrip</Fit>
      </div>

      <div className="mb-px ml-[332px] flex h-[27px] w-[38px] flex-col bg-[#efefef]">
        <div className="h-[19px] w-[19px] bg-[#d9d9e4] pl-[2px] text-[8px] leading-[9px] font-semibold">
          <Fit w={15} className="text-[#2020d8]">D: 0</Fit>
          <Fit w={15} className="text-[#a01818]">U: 0</Fit>
        </div>
        <div className="ml-[1px] h-[7px] w-[5px] border-b-2 border-[#e08a50] bg-[#0000c0]" />
      </div>
      <Svg w={10} h={6} className="ml-[7px]">
        <path d="M.5 5.500L5 1l4.500 4.500" stroke="#fff" strokeWidth="1.200" />
      </Svg>
      <Svg w={14} h={12} className="ml-[7px]">
        <path d="M3.500 1.500h9.500v7H4.500M5.500 11h6M8.500 8.500v2.500M.5 .7h3v3.500h-3zM2 4.200v6.500" stroke="#fff" />
      </Svg>
      <Svg w={14} h={12} className="ml-[6px]">
        <path d="M.5 4h2L5.500 1v10l-3-3h-2zM7.500 4c.8 1 .8 3 0 4M9.500 2.500c1.600 2 1.600 5 0 7M11.500 1c2.200 3 2.200 7 0 10" stroke="#fff" />
      </Svg>
      <Svg w={14} h={14} className="ml-[5px]">
        <path d="M.7 .7h12v9H8.500v3L5.800 9.700H.7zM3 3.500h7.500M3 6.500h7.500" stroke="#fff" />
      </Svg>
      <div className="ml-[7px] flex w-[42px] flex-col items-center text-[10px] leading-[13.500px]">
        <Fit w={22}>21:31</Fit>
        <Fit w={41}>22.3.2016.</Fit>
      </div>
      <div className="ml-[6px] h-full w-px bg-[#7e8f5a]" />
    </footer>
  );
}

export default function App() {
  return (
    <div className="flex h-[720px] w-[1280px] flex-col overflow-hidden bg-[#e6e6e6] font-['Open_Sans','Noto_Sans',sans-serif] text-[10.500px] leading-none select-none [-webkit-text-stroke:0.15px]">
      <TitleBar />
      <Ribbon />
      <FormulaBar />
      <Sheet />
      <SheetTabs />
      <StatusBar />
      <Taskbar />
    </div>
  );
}
